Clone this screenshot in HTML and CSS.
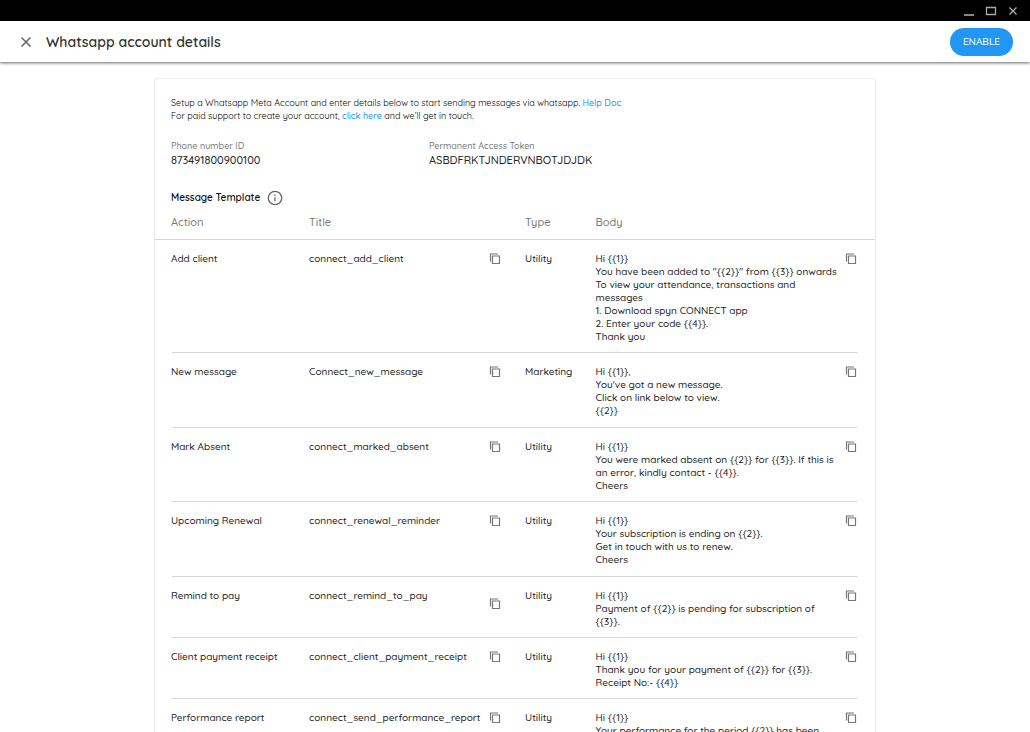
FILE: index.html
```html
<!DOCTYPE html>
<html lang="en">
<head>
<meta charset="utf-8">
<title>Whatsapp account details</title>
<link rel="stylesheet" href="styles.css">
</head>
<body>
<svg class="sprite" aria-hidden="true">
  <symbol id="copy" viewBox="0 0 12 12"><path d="M1.5 9V1.5H9M3.5 3.5h7v7.5h-7z" fill="none" stroke="currentColor" stroke-width="1.2"/></symbol>
</svg>
<div class="titlebar">
  <button class="win" aria-label="Minimize"><svg viewBox="0 0 12 12"><path d="M1 10h10" stroke-width="1.6"/></svg></button>
  <button class="win" aria-label="Maximize"><svg viewBox="0 0 12 12"><path d="M1.5 2.5h9v7h-9z" stroke-width="1.3"/></svg></button>
  <button class="win" aria-label="Close window"><svg viewBox="0 0 12 12"><path d="M2.5 2.5l7 7M9.5 2.5l-7 7" stroke-width="1.4"/></svg></button>
</div>
<header class="header">
  <button class="close" aria-label="Close"><svg viewBox="0 0 12 12"><path d="M1.5 1.5l9 9M10.5 1.5l-9 9" stroke-width="1.5"/></svg></button>
  <h1 class="title">Whatsapp account details</h1>
  <button class="enable">ENABLE</button>
</header>
<main class="main">
  <section class="card">
    <p class="intro">Setup a Whatsapp Meta Account and enter details below to start sending messages via whatsapp. <a href="#">Help Doc</a><br>For paid support to create your account, <a href="#">click here</a> and we’ll get in touch.</p>
    <dl class="fields">
      <div class="field"><dt>Phone number ID</dt><dd>873491800900100</dd></div>
      <div class="field"><dt>Permanent Access Token</dt><dd>ASBDFRKTJNDERVNBOTJDJDK</dd></div>
    </dl>
    <div class="section-head">
      <h2 class="section-title">Message Template</h2>
      <button class="info" aria-label="Info"><svg viewBox="0 0 16 16"><circle cx="8" cy="8" r="6.7" stroke-width="1.3"/><path d="M8 7.3v4M8 4.6v1.4" stroke-width="1.3"/></svg></button>
    </div>
    <table class="templates">
      <colgroup><col class="c-action"><col class="c-title"><col class="c-copy"><col class="c-type"><col class="c-body"><col></colgroup>
      <thead>
        <tr><th>Action</th><th colspan="2">Title</th><th>Type</th><th colspan="2">Body</th></tr>
      </thead>
      <tbody>
        <tr>
          <td>Add client</td><td>connect_add_client</td>
          <td><button class="copy" aria-label="Copy title"><svg><use href="#copy"/></svg></button></td>
          <td>Utility</td>
          <td>Hi {{1}}<br>You have been added to "{{2}}" from {{3}} onwards<br>To view your attendance, transactions and<br>messages<br>1. Download spyn CONNECT app<br>2. Enter your code {{4}}.<br>Thank you</td>
          <td><button class="copy" aria-label="Copy body"><svg><use href="#copy"/></svg></button></td>
        </tr>
        <tr class="medium">
          <td>New message</td><td>Connect_new_message</td>
          <td><button class="copy" aria-label="Copy title"><svg><use href="#copy"/></svg></button></td>
          <td>Marketing</td>
          <td>Hi {{1}},<br>You've got a new message.<br>Click on link below to view.<br>{{2}}</td>
          <td><button class="copy" aria-label="Copy body"><svg><use href="#copy"/></svg></button></td>
        </tr>
        <tr>
          <td>Mark Absent</td><td>connect_marked_absent</td>
          <td><button class="copy" aria-label="Copy title"><svg><use href="#copy"/></svg></button></td>
          <td>Utility</td>
          <td>Hi {{1}}<br>You were marked absent on {{2}} for {{3}}. If this is<br>an error, kindly contact - {{4}}.<br>Cheers</td>
          <td><button class="copy" aria-label="Copy body"><svg><use href="#copy"/></svg></button></td>
        </tr>
        <tr class="medium">
          <td>Upcoming Renewal</td><td>connect_renewal_reminder</td>
          <td><button class="copy" aria-label="Copy title"><svg><use href="#copy"/></svg></button></td>
          <td>Utility</td>
          <td>Hi {{1}}<br>Your subscription is ending on {{2}}.<br>Get in touch with us to renew.<br>Cheers</td>
          <td><button class="copy" aria-label="Copy body"><svg><use href="#copy"/></svg></button></td>
        </tr>
        <tr>
          <td>Remind to pay</td><td>connect_remind_to_pay</td>
          <td class="lowered"><button class="copy" aria-label="Copy title"><svg><use href="#copy"/></svg></button></td>
          <td>Utility</td>
          <td>Hi {{1}}<br>Payment of {{2}} is pending for subscription of<br>{{3}}.</td>
          <td><button class="copy" aria-label="Copy body"><svg><use href="#copy"/></svg></button></td>
        </tr>
        <tr>
          <td>Client payment receipt</td><td>connect_client_payment_receipt</td>
          <td><button class="copy" aria-label="Copy title"><svg><use href="#copy"/></svg></button></td>
          <td>Utility</td>
          <td>Hi {{1}}<br>Thank you for your payment of {{2}} for {{3}}.<br>Receipt No:- {{4}}</td>
          <td><button class="copy" aria-label="Copy body"><svg><use href="#copy"/></svg></button></td>
        </tr>
        <tr>
          <td>Performance report</td><td>connect_send_performance_report</td>
          <td><button class="copy" aria-label="Copy title"><svg><use href="#copy"/></svg></button></td>
          <td>Utility</td>
          <td>Hi {{1}}<br>Your performance for the period {{2}} has been</td>
          <td><button class="copy" aria-label="Copy body"><svg><use href="#copy"/></svg></button></td>
        </tr>
      </tbody>
    </table>
  </section>
</main>
</body>
</html>
```
FILE: styles.css
```css
* { box-sizing: border-box; }
body {
  margin: 0;
  height: 100vh;
  display: flex;
  flex-direction: column;
  overflow: hidden;
  background: #fff;
  color: #222;
  font: 500 10px/13px Quicksand, Lato, sans-serif;
}
h1, h2, p, dl, dd { margin: 0; }
button { padding: 0; border: 0; background: none; font: inherit; cursor: pointer; }
svg { display: block; fill: none; stroke: currentColor; }
a { color: #2196f3; font-weight: 500; text-decoration: none; }
.sprite { display: none; }

.titlebar {
  flex: none;
  height: 21px;
  padding: 0 11px;
  display: flex;
  justify-content: flex-end;
  align-items: center;
  gap: 10px;
  background: #000;
}
.win { width: 12px; color: #aaa; }
.win svg { width: 12px; height: 12px; }

.header {
  flex: none;
  height: 41px;
  padding: 0 17px 0 20px;
  display: flex;
  align-items: center;
  box-shadow: 0 1px 3px rgba(0, 0, 0, .6);
}
.close { width: 12px; color: #666; }
.close svg { width: 12px; height: 12px; }
.title { margin-left: 14px; font-size: 14px; line-height: 20px; font-weight: 600; color: #333; }
.enable {
  margin-left: auto;
  height: 28px;
  padding: 0 13px;
  border-radius: 14px;
  background: #2196f3;
  color: #fff;
}

.main { flex: 1; min-height: 0; padding-top: 16px; overflow: auto; scrollbar-width: none; }
.card {
  width: 70.1%;
  min-height: 100%;
  margin: 0 auto;
  padding-top: 17px;
  border: 1px solid #ececec;
  border-radius: 3px;
}
.intro { padding: 0 16px; font-size: 9px; font-weight: 400; color: #000; }
.fields { display: flex; padding: 17px 16px 0; }
.field { width: 258px; }
.field dt { color: #777; font-size: 9px; }
.field dd { margin-top: 2px; font-size: 11px; }
.section-head { display: flex; align-items: center; gap: 7px; padding: 23px 16px 0; }
.section-title { font-size: 10px; line-height: 14px; font-weight: 600; color: #111; }
.info { color: #666; }
.info svg { width: 16px; height: 16px; }

.templates { width: 100%; table-layout: fixed; border-collapse: separate; border-spacing: 0; }
.c-action { width: 21.4%; }
.c-title { width: 25%; }
.c-copy { width: 5%; }
.c-type { width: 9.8%; }
.c-body { width: 34.7%; }
.templates th {
  padding: 10px 0;
  border-bottom: 1px solid #d8d8d8;
  color: #777;
  font-size: 11px;
  font-weight: 500;
  text-align: left;
}
.templates td { padding: 12px 0 10px; vertical-align: top; white-space: nowrap; }
.templates th:first-child, .templates td:first-child { padding-left: 16px; }
.templates tbody tr {
  background: linear-gradient(#d8d8d8, #d8d8d8) center bottom / calc(100% - 34px) 1px no-repeat;
}
.templates .medium { height: 75px; }
.templates .lowered { padding-top: 20px; }
.copy { display: block; color: #777; }
.copy svg { width: 12px; height: 13px; }
```
